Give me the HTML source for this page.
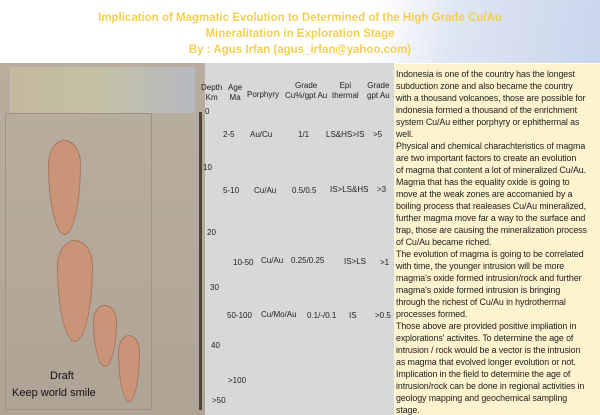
<!DOCTYPE html><html><head><style>
body{margin:0;width:600px;height:415px;overflow:hidden;position:relative;font-family:"Liberation Sans",sans-serif;background:#fff}
#hdr{position:absolute;left:0;top:0;width:600px;height:63px;background:linear-gradient(100deg,#fff 0%,#fff 62%,#dfe6f3 75%,#c8d5ec 100%)}
#t{position:absolute;top:10px;left:0;width:600px;text-align:center;color:#f6cf4f;font-weight:bold;font-size:11.5px;line-height:16px}
#img{position:absolute;left:0;top:63px;width:205px;height:352px;background:linear-gradient(180deg,#b8ad9f,#b3a899 60%,#aea395)}
#grey{position:absolute;left:205px;top:63px;width:189px;height:352px;background:#d8d8d8}
#bar{position:absolute;left:199px;top:112px;width:3px;height:298px;background:#4a443c}
#txt{position:absolute;left:394px;top:64px;width:206px;height:351px;background:#fdf3cf;font-size:8.9px;line-height:12px;color:#222;padding:4px 0 0 2px;box-sizing:border-box;letter-spacing:-0.1px;white-space:nowrap;overflow:hidden}
.a{position:absolute;font-size:8px;color:#222;white-space:nowrap;line-height:10px}
.c{text-align:center}
.blob{position:absolute;background:#c99477;border:1px solid #a8775e;border-radius:50% 50% 50% 50%/25% 25% 75% 75%}
</style></head><body>
<div id="hdr"></div>
<div id="t">Implication of Magmatic Evolution to Determined of the High Grade Cu/Au<br>Mineralitation in Exploration Stage<br>By : Agus Irfan (agus_irfan@yahoo.com)</div>
<div id="img">
<div style="position:absolute;left:10px;top:4px;width:185px;height:46px;background:linear-gradient(90deg,#c8bca0,#c7c6a8 50%,#b6bccb);opacity:.8"></div>
<div style="position:absolute;left:5px;top:50px;width:145px;height:295px;border:1px solid #9c9488"></div>
<div class="blob" style="left:48px;top:77px;width:31px;height:93px"></div>
<div class="blob" style="left:57px;top:177px;width:34px;height:100px"></div>
<div class="blob" style="left:93px;top:242px;width:22px;height:60px"></div>
<div class="blob" style="left:118px;top:272px;width:20px;height:65px"></div>
<div style="position:absolute;left:50px;top:305px;font-size:11px;line-height:16px;color:#111">Draft</div>
<div style="position:absolute;left:12px;top:322px;font-size:11px;line-height:16px;color:#111">Keep world smile</div>
</div>
<div id="grey"></div>
<div id="bar"></div>
<div class="a c" style="left:201px;top:83px">Depth<br>Km</div>
<div class="a c" style="left:228px;top:83px">Age<br>Ma</div>
<div class="a" style="left:247px;top:90px">Porphyry</div>
<div class="a c" style="left:285px;top:81px">Grade<br>Cu%/gpt Au</div>
<div class="a c" style="left:332px;top:81px">Epi<br>thermal</div>
<div class="a c" style="left:367px;top:81px">Grade<br>gpt Au</div>
<div class="a" style="left:205px;top:107px">0</div>
<div class="a" style="left:203px;top:163px">10</div>
<div class="a" style="left:207px;top:228px">20</div>
<div class="a" style="left:210px;top:283px">30</div>
<div class="a" style="left:211px;top:341px">40</div>
<div class="a" style="left:212px;top:396px">&gt;50</div>
<div class="a" style="left:223px;top:130px">2-5</div><div class="a" style="left:250px;top:130px">Au/Cu</div><div class="a" style="left:298px;top:130px">1/1</div><div class="a" style="left:326px;top:130px">LS&amp;HS&gt;IS</div><div class="a" style="left:373px;top:130px">&gt;5</div>
<div class="a" style="left:223px;top:186px">5-10</div><div class="a" style="left:254px;top:186px">Cu/Au</div><div class="a" style="left:292px;top:186px">0.5/0.5</div><div class="a" style="left:330px;top:185px">IS&gt;LS&amp;HS</div><div class="a" style="left:377px;top:185px">&gt;3</div>
<div class="a" style="left:233px;top:258px">10-50</div><div class="a" style="left:261px;top:256px">Cu/Au</div><div class="a" style="left:291px;top:256px">0.25/0.25</div><div class="a" style="left:344px;top:257px">IS&gt;LS</div><div class="a" style="left:380px;top:258px">&gt;1</div>
<div class="a" style="left:227px;top:311px">50-100</div><div class="a" style="left:261px;top:310px">Cu/Mo/Au</div><div class="a" style="left:307px;top:311px">0.1/-/0.1</div><div class="a" style="left:349px;top:311px">IS</div><div class="a" style="left:375px;top:311px">&gt;0.5</div>
<div class="a" style="left:228px;top:376px">&gt;100</div>
<div id="txt">Indonesia is one of the country has the longest<br>subduction zone and also became the country<br>with a thousand volcanoes, those are possible for<br>indonesia formed a thousand of the enrichment<br>system Cu/Au either porphyry or ephithermal as<br>well.<br>Physical and chemical charachteristics of magma<br>are two important factors to create an evolution<br>of magma that content a lot of mineralized Cu/Au.<br>Magma that has the equality oxide is going to<br>move at the weak zones are accomanied by a<br>boiling process that realeases Cu/Au mineralized,<br>further magma move far a way to the surface and<br>trap, those are causing the mineralization process<br>of Cu/Au became riched.<br>The evolution of magma is going to be correlated<br>with time, the younger intrusion will be more<br>magma's oxide formed intrusion/rock and further<br>magma's oxide formed intrusion is bringing<br>through the richest of Cu/Au in hydrothermal<br>processes formed.<br>Those above are provided positive impliation in<br>explorations' activites. To determine the age of<br>intrusion / rock would be a vector is the intrusion<br>as magma that evolved longer evolution or not.<br>Implication in the field to determine the age of<br>intrusion/rock can be done in regional activities in<br>geology mapping and geochemical sampling<br>stage.</div>
</body></html>
